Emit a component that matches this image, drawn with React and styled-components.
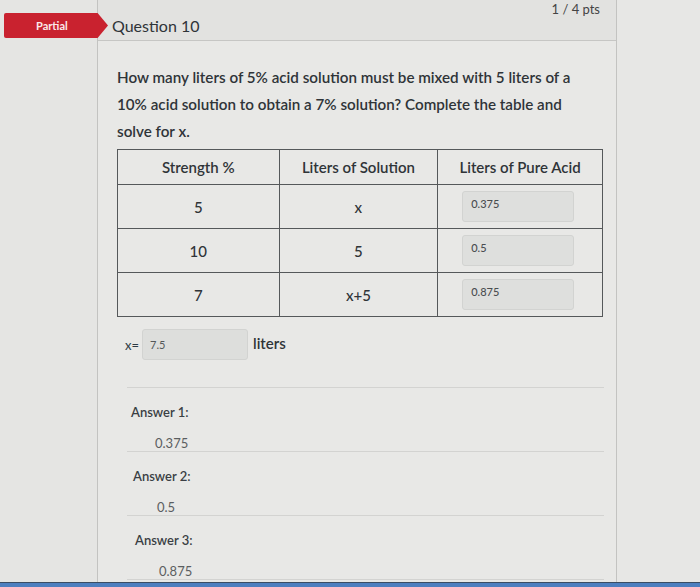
import React from "react";
import styled, { createGlobalStyle } from "styled-components";

const Global = createGlobalStyle`
  html, body { margin: 0; padding: 0; }
  body {
    background: #e5e5e3;
    font-family: Lato, "Open Sans", sans-serif;
    color: #2d3b45;
  }
`;

const Page = styled.div`
  width: 700px;
  height: 587px;
  display: flex;
  flex-direction: column;
  overflow: hidden;
`;

const Main = styled.div`
  flex: 1;
  display: flex;
  min-height: 0;
`;

const Gutter = styled.div`
  width: 97px;
  flex-shrink: 0;
  padding-top: 13px;
  position: relative;
  z-index: 2;
`;

const Badge = styled.div`
  width: 104px;
  height: 25px;
  margin-left: 4px;
  background: #c9222f;
  clip-path: polygon(0 0, 90% 0, 100% 50%, 90% 100%, 0 100%);
  border-radius: 2px 0 0 2px;
  display: flex;
  align-items: center;
  padding-left: 32px;
  box-sizing: border-box;
  color: #fbe9ea;
  font-size: 11px;
  font-weight: 700;
`;

const Card = styled.div`
  width: 518px;
  flex-shrink: 0;
  background: #e8e8e6;
  border-left: 1px solid #c3c3c1;
  border-right: 1px solid #c3c3c1;
  display: flex;
  flex-direction: column;
`;

const Header = styled.div`
  height: 40px;
  flex-shrink: 0;
  background: #e2e2e0;
  border-bottom: 1px solid #c6c6c4;
  display: flex;
  justify-content: space-between;
  padding: 0 16px 0 14px;
`;

const Title = styled.div`
  font-size: 16px;
  margin-top: 16px;
  color: #2f3438;
`;

const Pts = styled.div`
  font-size: 13px;
  margin-top: 1px;
  color: #444;
`;

const Body = styled.div`
  padding: 0 12px 0 19px;
  display: flex;
  flex-direction: column;
`;

const Prompt = styled.p`
  margin: 23px 0 0;
  font-size: 15.2px;
  font-weight: 600;
  line-height: 27px;
  color: #2f3438;
  width: 475px;
`;

const Table = styled.table`
  margin-top: 4px;
  width: 486px;
  border-collapse: collapse;
  border: 1.5px solid #55585a;
  font-size: 15px;
  color: #2f3438;
`;

const Th = styled.th`
  height: 32px;
  font-weight: 600;
  border: 1.5px solid #55585a;
  text-align: center;
  width: ${p => p.$w}px;
`;

const Td = styled.td`
  height: 43px;
  border: 1.5px solid #55585a;
  text-align: center;
  font-weight: 500;
  padding: 0;
`;

const CellInput = styled.div`
  margin-left: 24px;
  width: 112px;
  height: 31px;
  background: #dedfdd;
  border: 1px solid #d2d3d1;
  border-radius: 3px;
  box-sizing: border-box;
  font-size: 11px;
  color: #4a4d50;
  text-align: left;
  padding: 5px 8px;
`;

const XRow = styled.div`
  margin-top: 12px;
  padding-left: 8px;
  display: flex;
  align-items: center;
  gap: 3px;
  font-size: 13px;
`;

const XInput = styled.div`
  width: 106px;
  height: 31px;
  background: #dddedc;
  border: 1px solid #d2d3d1;
  border-radius: 3px;
  box-sizing: border-box;
  font-size: 11px;
  color: #55585a;
  padding: 8px 7px;
`;

const Unit = styled.span`
  font-size: 15px;
  font-weight: 600;
  margin-left: 2px;
  margin-top: -3px;
  color: #2f3438;
`;

const Answers = styled.div`
  margin-top: 27px;
  border-top: 1px solid #d3d3d1;
  margin-left: 10px;
`;

const Answer = styled.div`
  padding: 15px 0 2px ${p => p.$indent}px;
  border-bottom: 1px solid #d3d3d1;
  height: 64px;
  box-sizing: border-box;
  display: flex;
  flex-direction: column;
  gap: 13px;
`;

const Label = styled.div`
  font-size: 13px;
  font-weight: 600;
  line-height: 18px;
  color: #3a3f44;
`;

const Value = styled.div`
  font-size: 13px;
  line-height: 18px;
  padding-left: 24px;
  color: #5b5e61;
`;

const Side = styled.div`
  flex: 1;
  background: #e7e7e5;
`;

const Taskbar = styled.div`
  height: 4px;
  background: #4d7fbf;
  border-top: 1px solid #3a4d63;
`;

const rows = [
  ["5", "x", "0.375"],
  ["10", "5", "0.5"],
  ["7", "x+5", "0.875"],
];

const answers = [
  ["Answer 1:", "0.375", 4],
  ["Answer 2:", "0.5", 6],
  ["Answer 3:", "0.875", 8],
];

export default function App() {
  return (
    <Page>
      <Global />
      <Main>
        <Gutter>
          <Badge>Partial</Badge>
        </Gutter>
        <Card>
          <Header>
            <Title>Question 10</Title>
            <Pts>1 / 4 pts</Pts>
          </Header>
          <Body>
            <Prompt>
              How many liters of 5% acid solution must be mixed with 5 liters of a
              10% acid solution to obtain a 7% solution? Complete the table and
              solve for x.
            </Prompt>
            <Table>
              <thead>
                <tr>
                  <Th $w={163}>Strength %</Th>
                  <Th $w={160}>Liters of Solution</Th>
                  <Th $w={163}>Liters of Pure Acid</Th>
                </tr>
              </thead>
              <tbody>
                {rows.map(([s, l, a]) => (
                  <tr key={s}>
                    <Td>{s}</Td>
                    <Td>{l}</Td>
                    <Td>
                      <CellInput>{a}</CellInput>
                    </Td>
                  </tr>
                ))}
              </tbody>
            </Table>
            <XRow>
              <span>x=</span>
              <XInput>7.5</XInput>
              <Unit>liters</Unit>
            </XRow>
            <Answers>
              {answers.map(([label, value, indent]) => (
                <Answer key={label} $indent={indent}>
                  <Label>{label}</Label>
                  <Value>{value}</Value>
                </Answer>
              ))}
            </Answers>
          </Body>
        </Card>
        <Side />
      </Main>
      <Taskbar />
    </Page>
  );
}
